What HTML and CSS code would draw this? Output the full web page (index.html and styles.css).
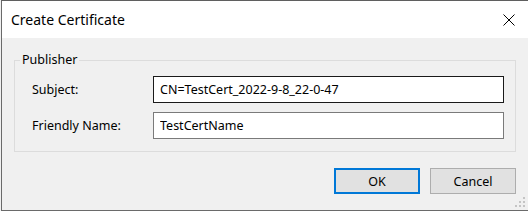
FILE: index.html
```html
<!DOCTYPE html>
<html lang="en">
<head>
    <meta charset="UTF-8">
    <title>Create Certificate</title>
    <link rel="stylesheet" href="styles.css">
</head>
<body>
    <div class="dialog">
        <div class="titlebar">
            <span class="title">Create Certificate</span>
            <span class="close-btn">
                <svg width="12" height="12" viewBox="0 0 12 12">
                    <path d="M0.5 0.5 L11.5 11.5 M11.5 0.5 L0.5 11.5" stroke="#000" stroke-width="1" fill="none"/>
                </svg>
            </span>
        </div>
        <div class="dialog-body">
            <fieldset class="group">
                <legend>Publisher</legend>
                <div class="field-row">
                    <label class="field-label">Subject:</label>
                    <input class="field-input focused" type="text" value="CN=TestCert_2022-9-8_22-0-47">
                </div>
                <div class="field-row">
                    <label class="field-label">Friendly Name:</label>
                    <input class="field-input" type="text" value="TestCertName">
                </div>
            </fieldset>
            <div class="buttons">
                <button class="btn default">OK</button>
                <button class="btn">Cancel</button>
            </div>
            <svg class="grip" width="10" height="10" viewBox="0 0 10 10">
                <rect x="8" y="0" width="2" height="2" fill="#c4c4c4"/>
                <rect x="4" y="4" width="2" height="2" fill="#c4c4c4"/>
                <rect x="8" y="4" width="2" height="2" fill="#c4c4c4"/>
                <rect x="0" y="8" width="2" height="2" fill="#c4c4c4"/>
                <rect x="4" y="8" width="2" height="2" fill="#c4c4c4"/>
                <rect x="8" y="8" width="2" height="2" fill="#c4c4c4"/>
            </svg>
        </div>
    </div>
</body>
</html>
```

FILE: styles.css
```css
* {
    margin: 0;
    padding: 0;
    box-sizing: border-box;
}

html, body {
    width: 100%;
    height: 100%;
    overflow: hidden;
    background: #f0f0f0;
    font-family: "Noto Sans", "Open Sans", sans-serif;
    font-size: 12.5px;
    color: #000;
}

.dialog {
    margin-left: 1px;
    width: calc(100% - 1px);
    height: 211px;
    border-top: 1px solid #5f5f5f;
    border-left: 1px solid #6a6a6a;
    border-bottom: 1px solid #6a6a6a;
    background: #f0f0f0;
    display: flex;
    flex-direction: column;
}

.titlebar {
    height: 37px;
    background: #fff;
    display: flex;
    align-items: center;
    justify-content: space-between;
    padding-left: 9px;
    padding-right: 13px;
    flex-shrink: 0;
}

.title {
    font-size: 14px;
    line-height: 20px;
}

.close-btn {
    display: flex;
    width: 12px;
    height: 12px;
}

.dialog-body {
    position: relative;
    flex: 1;
    padding: 14px 12px 0 12px;
}

.group {
    border: 1px solid #dcdcdc;
    padding: 8px 11px 12px 5px;
}

.group legend {
    padding: 0 2px;
    line-height: 16px;
}

.field-row {
    display: flex;
    align-items: center;
    padding-left: 12px;
}

.field-row + .field-row {
    margin-top: 9px;
}

.field-label {
    width: 121px;
    flex-shrink: 0;
}

.field-input {
    flex: 1;
    height: 27px;
    border: 1px solid #7a7a7a;
    background: #fff;
    padding: 0 6px;
    font-family: inherit;
    font-size: 12.5px;
    color: #000;
    outline: none;
}

.field-input.focused {
    border-color: #1a1a1a;
}

.buttons {
    display: flex;
    justify-content: flex-end;
    gap: 10px;
    margin-top: 16px;
}

.btn {
    width: 86px;
    height: 26px;
    background: #e1e1e1;
    border: 1px solid #adadad;
    font-family: inherit;
    font-size: 12.5px;
    color: #000;
}

.btn.default {
    border: 2px solid #0078d7;
}

.grip {
    position: absolute;
    right: 3px;
    bottom: 3px;
}
```
